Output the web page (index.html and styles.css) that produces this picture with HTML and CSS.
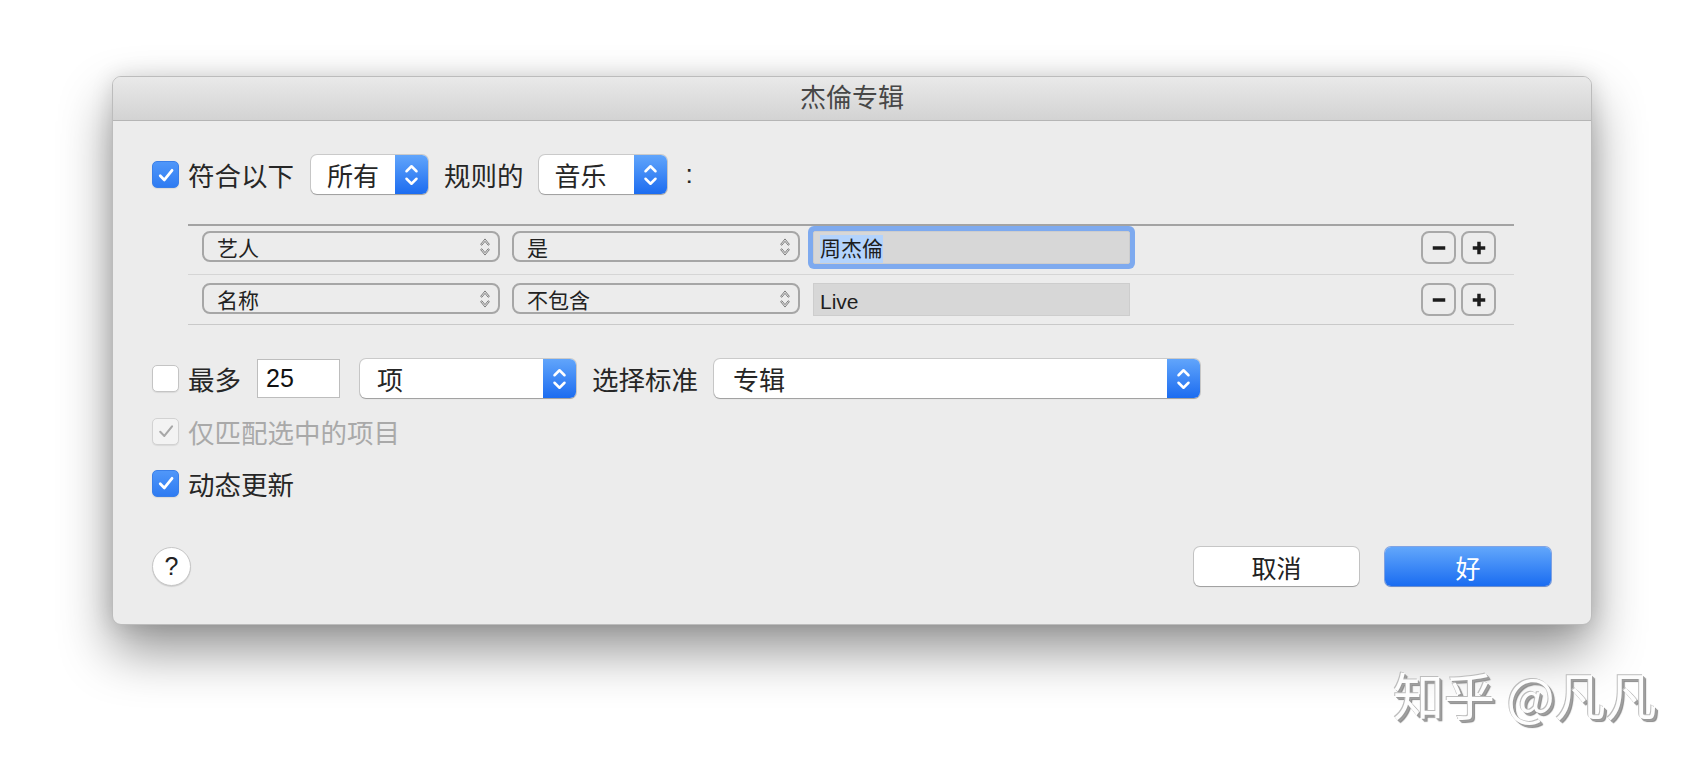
FILE: index.html
```html
<!DOCTYPE html>
<html lang="zh-CN">
<head>
  <meta charset="UTF-8" />
  <title>杰倫专辑</title>
  <link rel="stylesheet" href="styles.css">
</head>
<body>
  <div class="dialog">
    <div class="titlebar">杰倫专辑</div>

    <div class="content">
      <!-- match row -->
      <div class="row row-match">
        <label class="check-label">
          <span class="check on"><svg viewBox="0 0 16 16"><path d="M3.8 8.6 L6.8 11.6 L12.4 4.6" /></svg></span>
          <span>符合以下</span>
        </label>
        <div class="popup popup-all">
          <span class="popup-text">所有</span>
          <span class="popup-arrows"><svg viewBox="0 0 12 24"><path d="M2 9 L6 5 L10 9 M2 15 L6 19 L10 15" /></svg></span>
        </div>
        <span class="text">规则的</span>
        <div class="popup popup-music">
          <span class="popup-text">音乐</span>
          <span class="popup-arrows"><svg viewBox="0 0 12 24"><path d="M2 9 L6 5 L10 9 M2 15 L6 19 L10 15" /></svg></span>
        </div>
        <span class="colon">:</span>
      </div>

      <!-- rules -->
      <div class="rules">
        <div class="rule">
          <div class="rule-popup rp-field"><span>艺人</span><svg class="updown" viewBox="0 0 12 22"><path d="M2 8.6 L6 3.6 L10 8.6 L8.9 9.4 L6 5.8 L3.1 9.4 Z M2 13.4 L6 18.4 L10 13.4 L8.9 12.6 L6 16.2 L3.1 12.6 Z" /></svg></div>
          <div class="rule-popup rp-op"><span>是</span><svg class="updown" viewBox="0 0 12 22"><path d="M2 8.6 L6 3.6 L10 8.6 L8.9 9.4 L6 5.8 L3.1 9.4 Z M2 13.4 L6 18.4 L10 13.4 L8.9 12.6 L6 16.2 L3.1 12.6 Z" /></svg></div>
          <div class="field focused"><span class="sel">周杰倫</span></div>
          <div class="pm">
            <span class="pm-btn"><svg viewBox="0 0 16 16"><path d="M3 8 H13" /></svg></span>
            <span class="pm-btn"><svg viewBox="0 0 16 16"><path d="M3 8 H13 M8 3 V13" /></svg></span>
          </div>
        </div>
        <div class="rule">
          <div class="rule-popup rp-field"><span>名称</span><svg class="updown" viewBox="0 0 12 22"><path d="M2 8.6 L6 3.6 L10 8.6 L8.9 9.4 L6 5.8 L3.1 9.4 Z M2 13.4 L6 18.4 L10 13.4 L8.9 12.6 L6 16.2 L3.1 12.6 Z" /></svg></div>
          <div class="rule-popup rp-op"><span>不包含</span><svg class="updown" viewBox="0 0 12 22"><path d="M2 8.6 L6 3.6 L10 8.6 L8.9 9.4 L6 5.8 L3.1 9.4 Z M2 13.4 L6 18.4 L10 13.4 L8.9 12.6 L6 16.2 L3.1 12.6 Z" /></svg></div>
          <div class="field">Live</div>
          <div class="pm">
            <span class="pm-btn"><svg viewBox="0 0 16 16"><path d="M3 8 H13" /></svg></span>
            <span class="pm-btn"><svg viewBox="0 0 16 16"><path d="M3 8 H13 M8 3 V13" /></svg></span>
          </div>
        </div>
      </div>

      <!-- limit row -->
      <div class="row row-limit">
        <label class="check-label">
          <span class="check"></span>
          <span>最多</span>
        </label>
        <div class="num-input">25</div>
        <div class="popup popup-unit">
          <span class="popup-text">项</span>
          <span class="popup-arrows"><svg viewBox="0 0 12 24"><path d="M2 9 L6 5 L10 9 M2 15 L6 19 L10 15" /></svg></span>
        </div>
        <span class="text">选择标准</span>
        <div class="popup popup-sort">
          <span class="popup-text">专辑</span>
          <span class="popup-arrows"><svg viewBox="0 0 12 24"><path d="M2 9 L6 5 L10 9 M2 15 L6 19 L10 15" /></svg></span>
        </div>
      </div>

      <div class="row row-opt row-checked-only">
        <label class="check-label disabled">
          <span class="check dim"><svg viewBox="0 0 16 16"><path d="M3.8 8.6 L6.8 11.6 L12.4 4.6" /></svg></span>
          <span>仅匹配选中的项目</span>
        </label>
      </div>

      <div class="row row-opt row-live">
        <label class="check-label">
          <span class="check on"><svg viewBox="0 0 16 16"><path d="M3.8 8.6 L6.8 11.6 L12.4 4.6" /></svg></span>
          <span>动态更新</span>
        </label>
      </div>

      <div class="footer">
        <span class="help">?</span>
        <div class="buttons">
          <button class="btn">取消</button>
          <button class="btn btn-default">好</button>
        </div>
      </div>
    </div>
  </div>

  <div class="watermark">知乎 @凡凡</div>
</body>
</html>
```

FILE: styles.css
```css
* {
  box-sizing: border-box;
}

body {
  margin: 0;
  height: 774px;
  overflow: hidden;
  position: relative;
  background: #fff;
  font-family: "Liberation Sans", "Noto Sans CJK SC", sans-serif;
  color: #262626;
}

.dialog {
  margin: 76px 0 0 112px;
  width: 1480px;
  height: 549px;
  background: #ececec;
  border: 1px solid #bcbcbc;
  border-radius: 9px;
  box-shadow: 0 26px 52px rgba(0,0,0,0.42), 0 0 22px rgba(0,0,0,0.12);
  display: flex;
  flex-direction: column;
  overflow: hidden;
}

.titlebar {
  height: 44px;
  flex: none;
  background: linear-gradient(#e9e9e9, #d3d3d3);
  border-bottom: 1px solid #b5b5b5;
  text-align: center;
  font-size: 26px;
  line-height: 43px;
  color: #474747;
}

.content {
  flex: 1;
  display: flex;
  flex-direction: column;
  padding: 0 40px 38px 39px;
}

.row {
  display: flex;
  align-items: center;
  font-size: 26.5px;
}

.row-match {
  margin-top: 34px;
  height: 39px;
}

.check-label {
  display: flex;
  align-items: center;
  gap: 9px;
}

.check-label.disabled {
  color: #a9a9a9;
}

.check {
  width: 27px;
  height: 27px;
  border-radius: 5px;
  background: #fff;
  border: 1px solid #c4c4c4;
  box-shadow: 0 1px 1px rgba(0,0,0,0.08);
  display: flex;
  align-items: center;
  justify-content: center;
}

.check.on {
  background: linear-gradient(#5097f9, #2e7bf2);
  border-color: #3a7fe8;
}

.check.dim {
  background: #f3f3f3;
  border-color: #d2d2d2;
}

.check svg {
  width: 22px;
  height: 22px;
  fill: none;
  stroke: #fff;
  stroke-width: 2;
  stroke-linecap: round;
  stroke-linejoin: round;
}

.check.dim svg {
  stroke: #a8a8a8;
  stroke-width: 1.5;
}

.popup {
  height: 39px;
  display: flex;
  align-items: stretch;
  background: #fff;
  border-radius: 6px;
  box-shadow: 0 0 0 1px rgba(0,0,0,0.14), 0 1px 1px rgba(0,0,0,0.22);
  overflow: hidden;
  margin-left: 17px;
}

.popup-text {
  flex: 1;
  padding-left: 16px;
  display: flex;
  align-items: center;
  font-size: 26px;
}

.popup-arrows {
  width: 33px;
  background: linear-gradient(#61a5fb, #1c6cf0);
  display: flex;
  align-items: center;
  justify-content: center;
}

.popup-arrows svg {
  width: 15px;
  height: 30px;
  fill: none;
  stroke: #fff;
  stroke-width: 2;
  stroke-linecap: round;
  stroke-linejoin: round;
}

.popup-all { width: 117px; }
.popup-music { width: 128px; margin-left: 15px; }
.popup-unit { width: 216px; margin-left: 20px; }
.popup-sort { width: 486px; margin-left: 16px; }
.popup-unit .popup-text { padding-left: 17px; }
.popup-sort .popup-text { padding-left: 19px; }

.text {
  margin-left: 16px;
}

.colon {
  margin-left: 19px;
}

/* rules box */
.rules {
  margin: 30px 0 0 36px;
  width: 1326px;
  border-top: 2px solid #a3a3a3;
  border-bottom: 1px solid #c9c9c9;
}

.rule {
  height: 48px;
  display: flex;
  align-items: flex-start;
  padding: 5px 18px 0 14px;
  font-size: 21px;
}

.rule + .rule {
  height: 50px;
  padding-top: 8px;
  border-top: 1px solid #d5d5d5;
}

.rule-popup {
  height: 31px;
  border: 2px solid #a6a6a6;
  border-radius: 8px;
  display: flex;
  align-items: center;
  justify-content: space-between;
  padding: 0 6px 0 13px;
  color: #222;
}

.rp-field { width: 298px; }
.rp-op { width: 288px; margin-left: 12px; }

.updown {
  width: 14px;
  height: 24px;
  fill: none;
  stroke: #7a7a7a;
  stroke-width: 0.9;
  stroke-linejoin: round;
}

.field {
  width: 317px;
  height: 33px;
  margin-left: 13px;
  background: #d7d7d7;
  border: 1px solid #cdcdcd;
  display: flex;
  align-items: center;
  padding: 4px 0 0 6px;
  color: #1e1e1e;
}

.field.focused {
  border-radius: 2px;
  box-shadow: 0 0 0 5px #7eaaef;
  padding-top: 2px;
}

.sel {
  background: #b3d3fc;
  line-height: 28px;
}

.pm {
  margin-left: auto;
  display: flex;
  gap: 5px;
}

.pm-btn {
  width: 35px;
  height: 33px;
  border: 2px solid #a8a8a8;
  border-radius: 8px;
  display: flex;
  align-items: center;
  justify-content: center;
}

.pm-btn svg {
  width: 20px;
  height: 20px;
  fill: none;
  stroke: #1c1c1c;
  stroke-width: 2.8;
}

/* limit row */
.row-limit {
  margin-top: 34px;
  height: 39px;
}

.num-input {
  width: 83px;
  height: 39px;
  margin-left: 16px;
  background: #fff;
  border: 1px solid #bdbdbd;
  display: flex;
  align-items: center;
  padding-left: 8px;
  font-size: 25px;
  color: #111;
}

.row-opt {
  height: 34px;
}

.row-checked-only { margin-top: 16px; }
.row-live { margin-top: 18px; }

/* footer */
.footer {
  margin-top: auto;
  display: flex;
  align-items: center;
  justify-content: space-between;
}

.help {
  width: 39px;
  height: 39px;
  border-radius: 50%;
  background: #fff;
  border: 1px solid #c6c6c6;
  box-shadow: 0 1px 1px rgba(0,0,0,0.12);
  display: flex;
  align-items: center;
  justify-content: center;
  font-size: 25px;
  color: #222;
}

.buttons {
  display: flex;
  gap: 26px;
}

.btn {
  width: 165px;
  height: 39px;
  border: none;
  border-radius: 6px;
  background: #fff;
  box-shadow: 0 0 0 1px rgba(0,0,0,0.16), 0 1px 1px rgba(0,0,0,0.2);
  font-family: inherit;
  font-size: 25px;
  color: #222;
}

.btn-default {
  width: 166px;
  background: linear-gradient(#62a7fb, #1a6cf1);
  box-shadow: 0 0 0 1px rgba(20,90,220,0.5), 0 1px 1px rgba(0,0,0,0.2);
  color: #fff;
}

.watermark {
  position: absolute;
  left: 1393px;
  top: 664px;
  font-family: "Noto Sans CJK SC", sans-serif;
  font-size: 51px;
  line-height: 1.2;
  color: #fdfdfd;
  text-shadow: -1px -1px 0 #bdbdbd, 1px 1px 0 #9a9a9a, 2px 2px 0 #a0a0a0, 3px 3px 1px #8a8a8a;
}
```
